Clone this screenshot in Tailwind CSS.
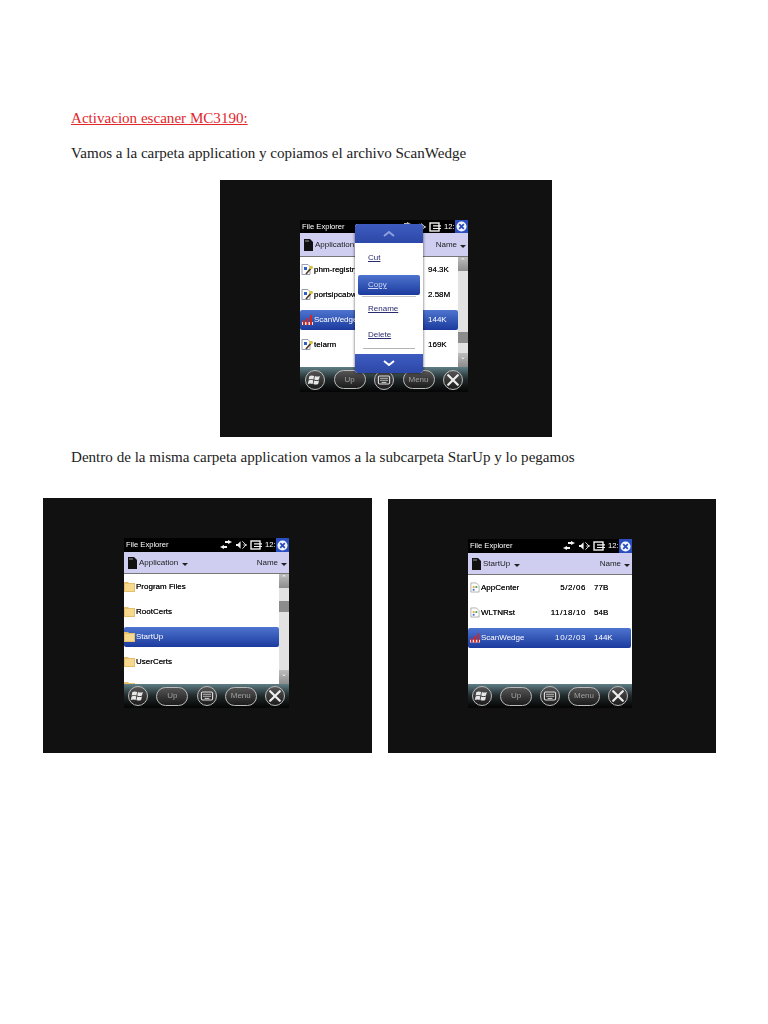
<!DOCTYPE html>
<html lang="en">
  <head>
    <meta charset="utf-8">
    <meta name="viewport" content="width=device-width, initial-scale=1">
    <title>Activacion escaner MC3190</title>
    <script src="https://cdn.jsdelivr.net/npm/@tailwindcss/browser@4"></script>
  </head>
  <body class="bg-white">
    <!-- shared icons -->
    <svg class="hidden" aria-hidden="true">
      <symbol id="flag" viewBox="0 0 20 20">
        <path fill="#e8e8e8" d="M3 5c2-1 4-1 6 0l-1 4.500c-2-1-4-1-6 0zM10 5c2 1 4 1 6 0l-1 4.500c-2 1-4 1-6 0zM2 10.500c2-1 4-1 6 0l-1 4.500c-2-1-4-1-6 0zM9 10.500c2 1 4 1 6 0l-1 4.500c-2 1-4 1-6 0z"/>
      </symbol>
      <symbol id="keys" viewBox="0 0 20 20">
        <rect x="3" y="5" width="14" height="10" rx="1.500" fill="none" stroke="#ddd" stroke-width="1.400"/>
        <path stroke="#ddd" stroke-width="1.400" stroke-dasharray="1.500 1" d="M5.500 8h9M5.500 10.500h9"/>
        <path stroke="#ddd" stroke-width="1.200" d="M7 13h6"/>
      </symbol>
      <symbol id="cross" viewBox="0 0 20 20">
        <path stroke="#eee" stroke-width="2.800" stroke-linecap="round" d="M4 4l12 12M16 4L4 16"/>
      </symbol>
      <symbol id="closedot" viewBox="0 0 12 12">
        <circle cx="6" cy="6" r="5.500" fill="#f2f4ff"/>
        <path stroke="#2b4fc0" stroke-width="2" d="M3.500 3.500l5 5M8.500 3.500l-5 5"/>
      </symbol>
      <symbol id="card" viewBox="0 0 10 12">
        <path fill="#111" d="M1 0h6l3 3v9H1z"/>
        <path fill="#555" d="M2 1h4v2H2z"/>
      </symbol>
      <symbol id="sync" viewBox="0 0 12 10">
        <path fill="#f2f2f2" d="M5 1h3V0l4 2-4 2V3H5zM7 6H4V5L0 7l4 2V8h3z"/>
      </symbol>
      <symbol id="sound" viewBox="0 0 12 10">
        <path fill="#f2f2f2" d="M0 4h2l3-3v8L2 6H0z"/>
        <path stroke="#f2f2f2" d="M7 1l4 4M7 9l4-4M8 5h4"/>
      </symbol>
      <symbol id="power" viewBox="0 0 12 10">
        <rect x="1" y="1" width="9" height="8" fill="none" stroke="#f2f2f2" stroke-width="1.400"/>
        <path stroke="#f2f2f2" stroke-width="1.200" d="M4 3.800h8M4 6.500h8"/>
      </symbol>
      <symbol id="folder" viewBox="0 0 11 11">
        <path fill="#e6bf6a" d="M0 1h4l1 1h6v9H0z"/>
        <path fill="#f6d98e" d="M1 3h9v7H1z"/>
      </symbol>
      <symbol id="doc" viewBox="0 0 11 11">
        <path fill="#fff" stroke="#8a8a8a" stroke-width=".7" d="M1 .5h6l3 3v7H1z"/>
        <path fill="#e8a13a" d="M3 4h2v2H3z"/>
        <path fill="#3e9e4a" d="M6 4h2v2H6z"/>
        <path fill="#3a6fc4" d="M3 7h2v2H3z"/>
      </symbol>
      <symbol id="setup" viewBox="0 0 12 11">
        <path fill="#fff" stroke="#6c7a96" stroke-width=".7" d="M1 .5h6l2 2v8H1z"/>
        <path fill="#2f5fc0" d="M3 3h3v3H3z"/>
        <path stroke="#53371a" stroke-width="1.600" d="M5 10l6-7"/>
        <path fill="#d9c23a" d="M8.500 2h3v3h-3z"/>
      </symbol>
      <symbol id="wedge" viewBox="0 0 11 11">
        <path fill="#e9e9f4" d="M0 8h11v3H0z"/>
        <path fill="#d8261c" d="M1 6h2v5H1zM4.500 4h2v7h-2zM8 1h2v10H8z"/>
      </symbol>
    </svg>

    <main class="pt-[110px] font-['Liberation_Serif',serif] text-[15.08px] leading-[17px] text-[#222]">
      <h1 class="ml-[71px] text-[#e3262a] underline">Activacion escaner MC3190:</h1>
      <p class="ml-[71px] mt-[18px]">Vamos a la carpeta application y copiamos el archivo ScanWedge</p>

      <!-- first capture -->
      <div class="ml-[220px] mt-[18px] w-[332px] h-[257px] bg-[#111] pt-[40px] pl-[80px]">
        <div class="relative flex flex-col w-[168px] h-[172px] bg-black font-['Liberation_Sans',sans-serif] text-[8px] leading-none text-[#1c1c1c] blur-[0.4px]">
          <div class="h-[13px] flex items-center pl-[2px] text-white text-[7.600px]">
            <span class="flex-1">File Explorer</span>
            <svg class="w-[12px] h-[10px]"><use href="#sync"/></svg>
            <svg class="w-[11px] h-[10px] ml-[4px]"><use href="#sound"/></svg>
            <svg class="w-[12px] h-[10px] ml-[3px]"><use href="#power"/></svg>
            <span class="ml-[3px] w-[11px] overflow-hidden">12:</span>
            <span class="w-[13px] h-[13px] bg-[#2b4fc0] flex items-center justify-center"><svg class="w-[11px] h-[11px]"><use href="#closedot"/></svg></span>
          </div>
          <div class="h-[24px] flex items-center bg-[#cfcdf0] border-b border-[#777] pl-[3px] pr-[2px]">
            <svg class="w-[10px] h-[12px]"><use href="#card"/></svg>
            <span class="ml-[2px] flex-1">Application</span>
            <span>Name</span>
            <span class="ml-[3px] mt-[3px] w-0 h-0 border-x-[3px] border-t-[3px] border-x-transparent border-t-[#222]"></span>
          </div>
          <div class="flex h-[110px] bg-white">
            <div class="w-[158px] flex flex-col gap-[5px] pt-[2.500px] [text-shadow:0_0_0.6px_#000]">
              <div class="h-[20px] flex items-center"><svg class="w-[12px] h-[11px] ml-px"><use href="#setup"/></svg><span class="ml-px flex-1">phm-registry</span><span class="w-[30px]">94.3K</span></div>
              <div class="h-[20px] flex items-center"><svg class="w-[12px] h-[11px] ml-px"><use href="#setup"/></svg><span class="ml-px flex-1">portsipcabw</span><span class="w-[30px]">2.58M</span></div>
              <div class="h-[20px] flex items-center rounded-[2px] bg-gradient-to-b from-[#4f74cf] to-[#1c3a9e] text-white [text-shadow:none]"><svg class="w-[11px] h-[11px] ml-[2px]"><use href="#wedge"/></svg><span class="ml-px flex-1">ScanWedge</span><span class="w-[30px]">144K</span></div>
              <div class="h-[20px] flex items-center"><svg class="w-[12px] h-[11px] ml-px"><use href="#setup"/></svg><span class="ml-px flex-1">telarm</span><span class="w-[30px]">169K</span></div>
            </div>
            <div class="w-[10px] flex flex-col bg-[#e2e2e2]">
              <div class="h-[14px] bg-gradient-to-b from-[#bdbdbd] to-[#8d8d8d] text-center text-[7px] text-white">⌃</div>
              <div class="h-[11px] mt-[61px] bg-[#8c8c8c]"></div>
              <div class="h-[14px] mt-[10px] bg-gradient-to-b from-[#bdbdbd] to-[#8d8d8d] text-center text-[7px] text-white">⌄</div>
            </div>
          </div>
          <div class="h-[25px] flex items-center justify-between px-[5px] bg-gradient-to-b from-[#5f7f86] via-[#20282a] to-[#050505] text-[#a0a0a0]">
            <span class="w-[20px] h-[20px] rounded-full border border-[#bbb] bg-gradient-to-b from-[#555] to-[#1c1c1c] flex items-center justify-center"><svg class="w-[16px] h-[16px]"><use href="#flag"/></svg></span>
            <span class="w-[32px] h-[19px] rounded-full border border-[#bbb] bg-gradient-to-b from-[#555] to-[#1c1c1c] flex items-center justify-center">Up</span>
            <span class="w-[20px] h-[20px] rounded-full border border-[#bbb] bg-gradient-to-b from-[#555] to-[#1c1c1c] flex items-center justify-center"><svg class="w-[16px] h-[16px]"><use href="#keys"/></svg></span>
            <span class="w-[32px] h-[19px] rounded-full border border-[#bbb] bg-gradient-to-b from-[#555] to-[#1c1c1c] flex items-center justify-center">Menu</span>
            <span class="w-[20px] h-[20px] rounded-full border border-[#bbb] bg-gradient-to-b from-[#555] to-[#1c1c1c] flex items-center justify-center"><svg class="w-[16px] h-[16px]"><use href="#cross"/></svg></span>
          </div>

          <!-- context menu over the list -->
          <div class="absolute left-[55px] top-[4px] w-[68px] h-[149px] flex flex-col rounded-[3px] bg-white shadow-[0_0_3px_rgba(0,0,0,0.7)] overflow-hidden text-[#2a2a6e]">
            <div class="h-[19px] flex items-center justify-center bg-gradient-to-b from-[#3e5cc0] to-[#2c48a8]">
              <svg class="w-[12px] h-[7px]" viewBox="0 0 12 7"><path fill="none" stroke="#8fa0dc" stroke-width="2" d="M1 6l5-4 5 4"/></svg>
            </div>
            <div class="flex-1 flex flex-col px-[3px] pt-[2px]">
              <div class="h-[26px] flex items-center pl-[10px] underline decoration-[0.5px]">Cut</div>
              <div class="h-[20px] mt-[4px] flex items-center pl-[10px] rounded-[2px] bg-gradient-to-b from-[#4f74cf] to-[#1c3a9e] text-[#cfd6f2] underline decoration-[0.5px]">Copy</div>
              <div class="h-[1px] mx-[4px] mt-[1px] bg-[#c4c4c4]"></div>
              <div class="h-[22px] mt-[1px] flex items-center pl-[10px] underline decoration-[0.5px]">Rename</div>
              <div class="h-[26px] mt-[2px] flex items-center pl-[10px] underline decoration-[0.5px]">Delete</div>
              <div class="h-[1px] mx-[5px] bg-[#b4b4b4]"></div>
            </div>
            <div class="h-[19px] flex items-center justify-center bg-gradient-to-b from-[#3e5cc0] to-[#2c48a8]">
              <svg class="w-[12px] h-[7px]" viewBox="0 0 12 7"><path fill="none" stroke="#fff" stroke-width="2" d="M1 1l5 4 5-4"/></svg>
            </div>
          </div>
        </div>
      </div>

      <p class="ml-[71px] mt-[12px]">Dentro de la misma carpeta application vamos a la subcarpeta StarUp y lo pegamos</p>

      <div class="flex ml-[43px] mt-[32px] gap-[16px] items-start">
        <!-- second capture -->
        <div class="w-[329px] h-[255px] bg-[#111] pt-[40px] pl-[81px]">
          <div class="flex flex-col w-[165px] h-[170px] bg-black font-['Liberation_Sans',sans-serif] text-[8px] leading-none text-[#1c1c1c] blur-[0.4px]">
            <div class="h-[14px] flex items-center pl-[2px] text-white text-[7.600px]">
              <span class="flex-1">File Explorer</span>
              <svg class="w-[12px] h-[10px]"><use href="#sync"/></svg>
              <svg class="w-[11px] h-[10px] ml-[4px]"><use href="#sound"/></svg>
              <svg class="w-[12px] h-[10px] ml-[3px]"><use href="#power"/></svg>
              <span class="ml-[3px] w-[11px] overflow-hidden">12:</span>
              <span class="w-[13px] h-[14px] bg-[#2b4fc0] flex items-center justify-center"><svg class="w-[11px] h-[11px]"><use href="#closedot"/></svg></span>
            </div>
            <div class="h-[22px] flex items-center bg-[#cfcdf0] border-b border-[#777] pl-[3px] pr-[2px]">
              <svg class="w-[10px] h-[12px]"><use href="#card"/></svg>
              <span class="ml-[2px]">Application</span>
              <span class="ml-[4px] mt-[3px] w-0 h-0 border-x-[3px] border-t-[3px] border-x-transparent border-t-[#222]"></span>
              <span class="ml-auto">Name</span>
              <span class="ml-[3px] mt-[3px] w-0 h-0 border-x-[3px] border-t-[3px] border-x-transparent border-t-[#222]"></span>
            </div>
            <div class="flex h-[110px] bg-white overflow-hidden">
              <div class="w-[155px] shrink-0 flex flex-col gap-[5px] pt-[2.500px] [text-shadow:0_0_0.6px_#000]">
                <div class="h-[20px] shrink-0 flex items-center"><svg class="w-[11px] h-[11px] mr-px"><use href="#folder"/></svg>Program Files</div>
                <div class="h-[20px] shrink-0 flex items-center"><svg class="w-[11px] h-[11px] mr-px"><use href="#folder"/></svg>RootCerts</div>
                <div class="h-[20px] shrink-0 flex items-center rounded-[2px] bg-gradient-to-b from-[#4f74cf] to-[#1c3a9e] text-white [text-shadow:none]"><svg class="w-[11px] h-[11px] mr-px"><use href="#folder"/></svg>StartUp</div>
                <div class="h-[20px] shrink-0 flex items-center"><svg class="w-[11px] h-[11px] mr-px"><use href="#folder"/></svg>UserCerts</div>
                <div class="h-[20px] shrink-0 flex items-center"><svg class="w-[11px] h-[11px] mr-px"><use href="#folder"/></svg></div>
              </div>
              <div class="w-[10px] flex flex-col bg-[#e2e2e2]">
                <div class="h-[14px] bg-gradient-to-b from-[#bdbdbd] to-[#8d8d8d] text-center text-[7px] text-white">⌃</div>
                <div class="h-[11px] mt-[13px] bg-[#8c8c8c]"></div>
                <div class="h-[14px] mt-[58px] bg-gradient-to-b from-[#bdbdbd] to-[#8d8d8d] text-center text-[7px] text-white">⌄</div>
              </div>
            </div>
            <div class="h-[24px] flex items-center justify-between px-[4px] bg-gradient-to-b from-[#5f7f86] via-[#20282a] to-[#050505] text-[#a0a0a0]">
              <span class="w-[20px] h-[20px] rounded-full border border-[#bbb] bg-gradient-to-b from-[#555] to-[#1c1c1c] flex items-center justify-center"><svg class="w-[16px] h-[16px]"><use href="#flag"/></svg></span>
              <span class="w-[32px] h-[19px] rounded-full border border-[#bbb] bg-gradient-to-b from-[#555] to-[#1c1c1c] flex items-center justify-center">Up</span>
              <span class="w-[20px] h-[20px] rounded-full border border-[#bbb] bg-gradient-to-b from-[#555] to-[#1c1c1c] flex items-center justify-center"><svg class="w-[16px] h-[16px]"><use href="#keys"/></svg></span>
              <span class="w-[32px] h-[19px] rounded-full border border-[#bbb] bg-gradient-to-b from-[#555] to-[#1c1c1c] flex items-center justify-center">Menu</span>
              <span class="w-[20px] h-[20px] rounded-full border border-[#bbb] bg-gradient-to-b from-[#555] to-[#1c1c1c] flex items-center justify-center"><svg class="w-[16px] h-[16px]"><use href="#cross"/></svg></span>
            </div>
          </div>
        </div>

        <!-- third capture -->
        <div class="mt-px w-[328px] h-[254px] bg-[#111] pt-[40px] pl-[80px]">
          <div class="flex flex-col w-[164px] h-[169px] bg-black font-['Liberation_Sans',sans-serif] text-[8px] leading-none text-[#1c1c1c] blur-[0.4px]">
            <div class="h-[14px] flex items-center pl-[2px] text-white text-[7.600px]">
              <span class="flex-1">File Explorer</span>
              <svg class="w-[12px] h-[10px]"><use href="#sync"/></svg>
              <svg class="w-[11px] h-[10px] ml-[4px]"><use href="#sound"/></svg>
              <svg class="w-[12px] h-[10px] ml-[3px]"><use href="#power"/></svg>
              <span class="ml-[3px] w-[11px] overflow-hidden">12:</span>
              <span class="w-[13px] h-[14px] bg-[#2b4fc0] flex items-center justify-center"><svg class="w-[11px] h-[11px]"><use href="#closedot"/></svg></span>
            </div>
            <div class="h-[22px] flex items-center bg-[#cfcdf0] border-b border-[#777] pl-[3px] pr-[2px]">
              <svg class="w-[10px] h-[12px]"><use href="#card"/></svg>
              <span class="ml-[2px]">StartUp</span>
              <span class="ml-[4px] mt-[3px] w-0 h-0 border-x-[3px] border-t-[3px] border-x-transparent border-t-[#222]"></span>
              <span class="ml-auto">Name</span>
              <span class="ml-[3px] mt-[3px] w-0 h-0 border-x-[3px] border-t-[3px] border-x-transparent border-t-[#222]"></span>
            </div>
            <div class="h-[109px] bg-white flex flex-col gap-[5px] pt-[2.500px] [text-shadow:0_0_0.6px_#000]">
              <div class="h-[20px] flex items-center"><svg class="w-[10px] h-[11px] ml-[2px]"><use href="#doc"/></svg><span class="ml-px flex-1">AppCenter</span><span class="w-[40px] text-right tracking-[0.6px]">5/2/06</span><span class="ml-[8px] w-[38px]">77B</span></div>
              <div class="h-[20px] flex items-center"><svg class="w-[10px] h-[11px] ml-[2px]"><use href="#doc"/></svg><span class="ml-px flex-1">WLTNRst</span><span class="w-[40px] text-right tracking-[0.6px]">11/18/10</span><span class="ml-[8px] w-[38px]">54B</span></div>
              <div class="h-[20px] flex items-center rounded-[2px] mr-px bg-gradient-to-b from-[#4f74cf] to-[#1c3a9e] text-white [text-shadow:none]"><svg class="w-[10px] h-[11px] ml-[2px]"><use href="#wedge"/></svg><span class="ml-px flex-1">ScanWedge</span><span class="w-[40px] text-right tracking-[0.6px]">10/2/03</span><span class="ml-[8px] w-[37px]">144K</span></div>
            </div>
            <div class="h-[24px] flex items-center justify-between px-[4px] bg-gradient-to-b from-[#5f7f86] via-[#20282a] to-[#050505] text-[#a0a0a0]">
              <span class="w-[20px] h-[20px] rounded-full border border-[#bbb] bg-gradient-to-b from-[#555] to-[#1c1c1c] flex items-center justify-center"><svg class="w-[16px] h-[16px]"><use href="#flag"/></svg></span>
              <span class="w-[32px] h-[19px] rounded-full border border-[#bbb] bg-gradient-to-b from-[#555] to-[#1c1c1c] flex items-center justify-center">Up</span>
              <span class="w-[20px] h-[20px] rounded-full border border-[#bbb] bg-gradient-to-b from-[#555] to-[#1c1c1c] flex items-center justify-center"><svg class="w-[16px] h-[16px]"><use href="#keys"/></svg></span>
              <span class="w-[32px] h-[19px] rounded-full border border-[#bbb] bg-gradient-to-b from-[#555] to-[#1c1c1c] flex items-center justify-center">Menu</span>
              <span class="w-[20px] h-[20px] rounded-full border border-[#bbb] bg-gradient-to-b from-[#555] to-[#1c1c1c] flex items-center justify-center"><svg class="w-[16px] h-[16px]"><use href="#cross"/></svg></span>
            </div>
          </div>
        </div>
      </div>
    </main>
  </body>
</html>
